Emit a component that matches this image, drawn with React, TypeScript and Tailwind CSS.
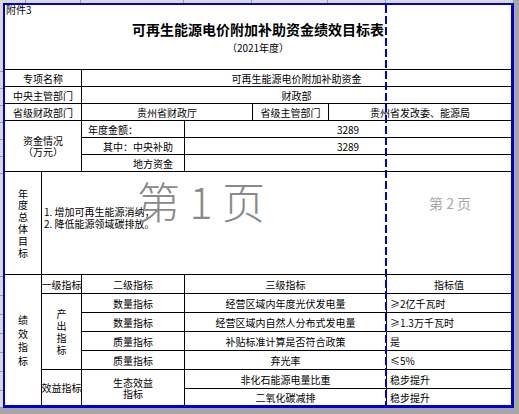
const topCols = [26, 55, 103, 68, 76, 58, 128]
const leftRows = [69, 17, 17, 17, 17, 17, 17, 103, 19, 19, 19, 19, 19, 19, 17]

const output = [
  ['数量指标', '经营区域内年度光伏发电量', '≥2亿千瓦时'],
  ['数量指标', '经营区域内自然人分布式发电量', '≥1.3万千瓦时'],
  ['质量指标', '补贴标准计算是否符合政策', '是'],
  ['质量指标', '弃光率', '≤5%'],
]

function Vertical({ text, lh }: { text: string; lh: string }) {
  return (
    <div className={`flex flex-col items-center ${lh}`}>
      {text.split('').map((ch, i) => (
        <span key={i}>{ch}</span>
      ))}
    </div>
  )
}

export default function App() {
  return (
    <div className="relative w-[519px] h-[414px] bg-[#a6a6a6] font-['Noto_Sans_CJK_SC',sans-serif] text-[10px] text-black overflow-hidden">
      {/* gray grid outside the print area */}
      <div className="flex h-[3px] w-[514px] bg-[#d9d9d9]">
        {topCols.map((w, i) => (
          <div key={i} style={{ width: w }} className="h-full border-r border-[#9a9a9a]" />
        ))}
      </div>
      <div className="flex">
        <div className="flex flex-col w-[3px] h-[405px] bg-[#d9d9d9]">
          {leftRows.map((h, i) => (
            <div key={i} style={{ height: h }} className="w-full border-b border-[#9a9a9a]" />
          ))}
        </div>

        {/* page */}
        <div className="relative flex flex-col w-[511px] h-[405px] bg-white border-l-2 border-t-2 border-r-[3px] border-b-[3px] border-[#0000d4]">
          {/* title */}
          <div className="h-[65px] border-b border-black flex flex-col">
            <div className="pl-[1px] leading-[10px]">附件3</div>
            <div className="mt-[6px] text-center text-[14px] font-bold leading-[16px]">
              可再生能源电价附加补助资金绩效目标表
            </div>
            <div className="mt-[5px] text-center leading-[12px]">（2021年度）</div>
          </div>

          <div className="flex h-[17px] border-b border-black">
            <div className="w-[77px] border-r border-black flex items-center justify-center">专项名称</div>
            <div className="flex-1 flex items-center justify-center">可再生能源电价附加补助资金</div>
          </div>
          <div className="flex h-[17px] border-b border-black">
            <div className="w-[77px] border-r border-black flex items-center justify-center">中央主管部门</div>
            <div className="flex-1 flex items-center justify-center">财政部</div>
          </div>
          <div className="flex h-[17px] border-b border-black">
            <div className="w-[77px] border-r border-black flex items-center justify-center">省级财政部门</div>
            <div className="w-[171px] border-r border-black flex items-center justify-center">贵州省财政厅</div>
            <div className="w-[76px] border-r border-black flex items-center justify-center">省级主管部门</div>
            <div className="flex-1 flex items-center justify-center">贵州省发改委、能源局</div>
          </div>

          {/* funds */}
          <div className="flex h-[51px] border-b border-black">
            <div className="w-[77px] border-r border-black flex flex-col items-center justify-center leading-[11px]">
              <span>资金情况</span>
              <span>（万元）</span>
            </div>
            <div className="flex-1 flex flex-col">
              <div className="flex h-[17px] border-b border-black">
                <div className="w-[103px] border-r border-black flex items-center pl-[6px]">年度金额：</div>
                <div className="flex-1 flex items-center justify-center">3289</div>
              </div>
              <div className="flex h-[17px] border-b border-black">
                <div className="w-[103px] border-r border-black flex items-center justify-end pr-[11px]">其中：中央补助</div>
                <div className="flex-1 flex items-center justify-center">3289</div>
              </div>
              <div className="flex flex-1">
                <div className="w-[103px] border-r border-black flex items-center justify-end pr-[11px]">地方资金</div>
                <div className="flex-1" />
              </div>
            </div>
          </div>

          {/* annual goals */}
          <div className="flex h-[103px] border-b border-black">
            <div className="w-[37px] border-r border-black flex items-center justify-center">
              <Vertical text="年度总体目标" lh="leading-[11.8px]" />
            </div>
            <div className="flex-1 flex flex-col justify-center pb-[10px] pl-[2px] leading-[12px]">
              <span>1. 增加可再生能源消纳；</span>
              <span>2. 降低能源领域碳排放。</span>
            </div>
          </div>

          {/* indicators */}
          <div className="flex flex-1">
            <div className="w-[37px] border-r border-black flex items-center justify-center">
              <Vertical text="绩效指标" lh="leading-[13.5px]" />
            </div>
            <div className="flex-1 flex flex-col">
              <div className="flex h-[19px] border-b border-black">
                <div className="w-[40px] border-r border-black flex items-center justify-center whitespace-nowrap">一级指标</div>
                <div className="w-[103px] border-r border-black flex items-center justify-center">二级指标</div>
                <div className="w-[202px] border-r border-black flex items-center justify-center">三级指标</div>
                <div className="flex-1 flex items-center justify-center">指标值</div>
              </div>
              <div className="flex flex-1">
                <div className="w-[40px] flex flex-col">
                  <div className="h-[76px] border-r border-b border-black flex items-center justify-center">
                    <Vertical text="产出指标" lh="leading-[12px]" />
                  </div>
                  <div className="flex-1 border-r border-black flex items-center justify-center whitespace-nowrap">效益指标</div>
                </div>
                <div className="flex-1 flex flex-col">
                  {output.map(([a, b, v], i) => (
                    <div key={i} className="flex h-[19px] border-b border-black">
                      <div className="w-[103px] border-r border-black flex items-center justify-center">{a}</div>
                      <div className="w-[202px] border-r border-black flex items-center justify-center">{b}</div>
                      <div className="flex-1 flex items-center pl-[3px]">{v}</div>
                    </div>
                  ))}
                  <div className="flex flex-1">
                    <div className="w-[103px] border-r border-black flex flex-col items-center justify-center leading-[11px]">
                      <span>生态效益</span>
                      <span>指标</span>
                    </div>
                    <div className="flex-1 flex flex-col">
                      <div className="flex h-[19px] border-b border-black">
                        <div className="w-[202px] border-r border-black flex items-center justify-center">非化石能源电量比重</div>
                        <div className="flex-1 flex items-center pl-[3px]">稳步提升</div>
                      </div>
                      <div className="flex flex-1">
                        <div className="w-[202px] border-r border-black flex items-center justify-center">二氧化碳减排</div>
                        <div className="flex-1 flex items-center pl-[3px]">稳步提升</div>
                      </div>
                    </div>
                  </div>
                </div>
              </div>
            </div>
          </div>

          {/* page break line and page labels */}
          <svg className="absolute left-[380px] top-0" width="2" height="400">
            <line x1="1" y1="0" x2="1" y2="400" stroke="#0000d4" strokeWidth="2" strokeDasharray="8 3" />
          </svg>
          <span className="absolute left-[132px] top-[174px] text-[43px] leading-none font-light text-[#8a8a8a] whitespace-nowrap">
            第 1 页
          </span>
          <span className="absolute left-[424px] top-[191px] text-[14px] leading-none text-[#a8a8a8] whitespace-nowrap">
            第 2 页
          </span>
        </div>
      </div>
    </div>
  )
}
